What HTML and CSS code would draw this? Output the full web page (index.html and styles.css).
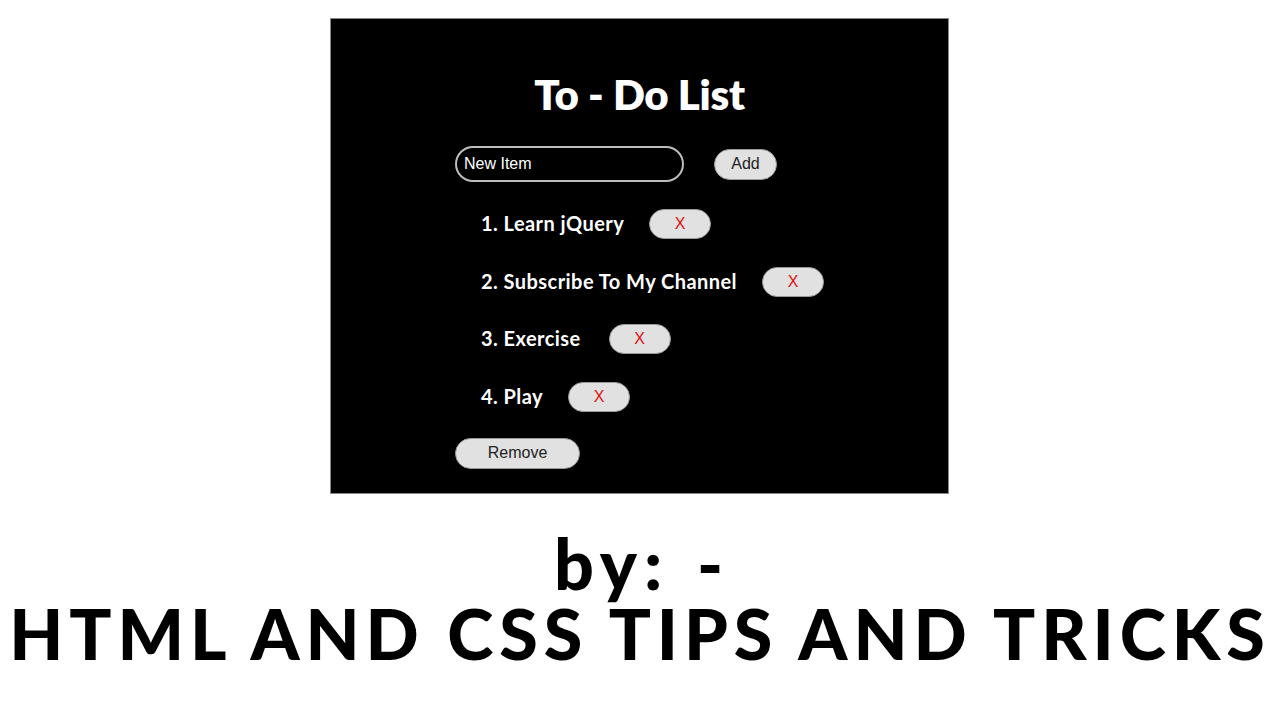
FILE: index.html
```html
<!DOCTYPE html>
<html>
<head>
<meta charset="utf-8">
<link rel="stylesheet" href="styles.css">
</head>
<body>
<div class="box">
  <h1 class="title">To - Do List</h1>
  <div class="form-row">
    <input class="item-input" type="text" value="New Item">
    <button class="btn btn-add">Add</button>
  </div>
  <ol class="todo-list">
    <li class="todo"><span class="todo-text">Learn jQuery</span><button class="btn btn-x">X</button></li>
    <li class="todo"><span class="todo-text">Subscribe To My Channel</span><button class="btn btn-x">X</button></li>
    <li class="todo"><span class="todo-text">Exercise</span><button class="btn btn-x btn-x-wide">X</button></li>
    <li class="todo"><span class="todo-text">Play</span><button class="btn btn-x">X</button></li>
  </ol>
  <button class="btn btn-remove">Remove</button>
</div>
<div class="credit">
  <div class="credit-line credit-by">by: -</div>
  <div class="credit-line">HTML AND CSS TIPS AND TRICKS</div>
</div>
</body>
</html>
```
FILE: styles.css
```css
html, body {
  margin: 0;
  padding: 0;
  background: #ffffff;
}
body {
  width: 1280px;
  height: 720px;
  overflow: hidden;
}
.box {
  box-sizing: border-box;
  width: 619px;
  height: 476px;
  margin: 18px 0 0 330px;
  background: #000;
  border: 1px solid #8a8a8a;
  padding: 45px 0 0 124px;
  display: flex;
  flex-direction: column;
  align-items: flex-start;
}
.title {
  margin: 0 0 0 -124px;
  width: 617px;
  height: 60px;
  line-height: 60px;
  text-align: center;
  color: #fff;
  font-family: "Lato", sans-serif;
  font-weight: 800;
  font-size: 42px;
  letter-spacing: -0.3px;
}
.form-row {
  margin-top: 22px;
  display: flex;
  align-items: center;
  height: 36px;
}
.item-input {
  box-sizing: border-box;
  width: 229px;
  height: 36px;
  border: 2px solid #bdbdbd;
  border-radius: 18px;
  background: #000;
  color: #fff;
  padding: 0 0 0 7px;
  font-family: "Liberation Sans", Arial, sans-serif;
  font-size: 16px;
  outline: none;
}
.btn {
  box-sizing: border-box;
  height: 31px;
  border: 1px solid #9a9a9a;
  border-radius: 16px;
  background: #e1e1e1;
  color: #222;
  font-family: "Liberation Sans", Arial, sans-serif;
  font-size: 16px;
  padding: 0;
  cursor: pointer;
}
.btn-add {
  width: 63px;
  margin-left: 30px;
}
.todo-list {
  margin: 27px 0 0 0;
  padding: 0 0 0 26px;
  list-style: decimal inside;
  display: flex;
  flex-direction: column;
  gap: 27.5px;
  color: #fff;
  font-family: "Lato", sans-serif;
  font-weight: 700;
  font-size: 20px;
  letter-spacing: 0.45px;
}
.todo {
  height: 30px;
  line-height: 28px;
}
.btn-x {
  width: 62px;
  height: 30px;
  margin-left: 25px;
  color: #e01010;
  vertical-align: top;
  letter-spacing: 0;
}
.btn-x-wide {
  margin-left: 28px;
}
.btn-remove {
  width: 125px;
  margin-top: 26px;
}
.credit {
  margin-top: 34px;
  text-align: center;
  font-family: "Lato", sans-serif;
  font-weight: 900;
  font-size: 70px;
  line-height: 70px;
  color: #000;
}
.credit-line {
  white-space: nowrap;
  letter-spacing: 5.9px;
}
.credit-by {
  word-spacing: 4px;
  letter-spacing: 7px;
  padding-left: 4px;
}
```
